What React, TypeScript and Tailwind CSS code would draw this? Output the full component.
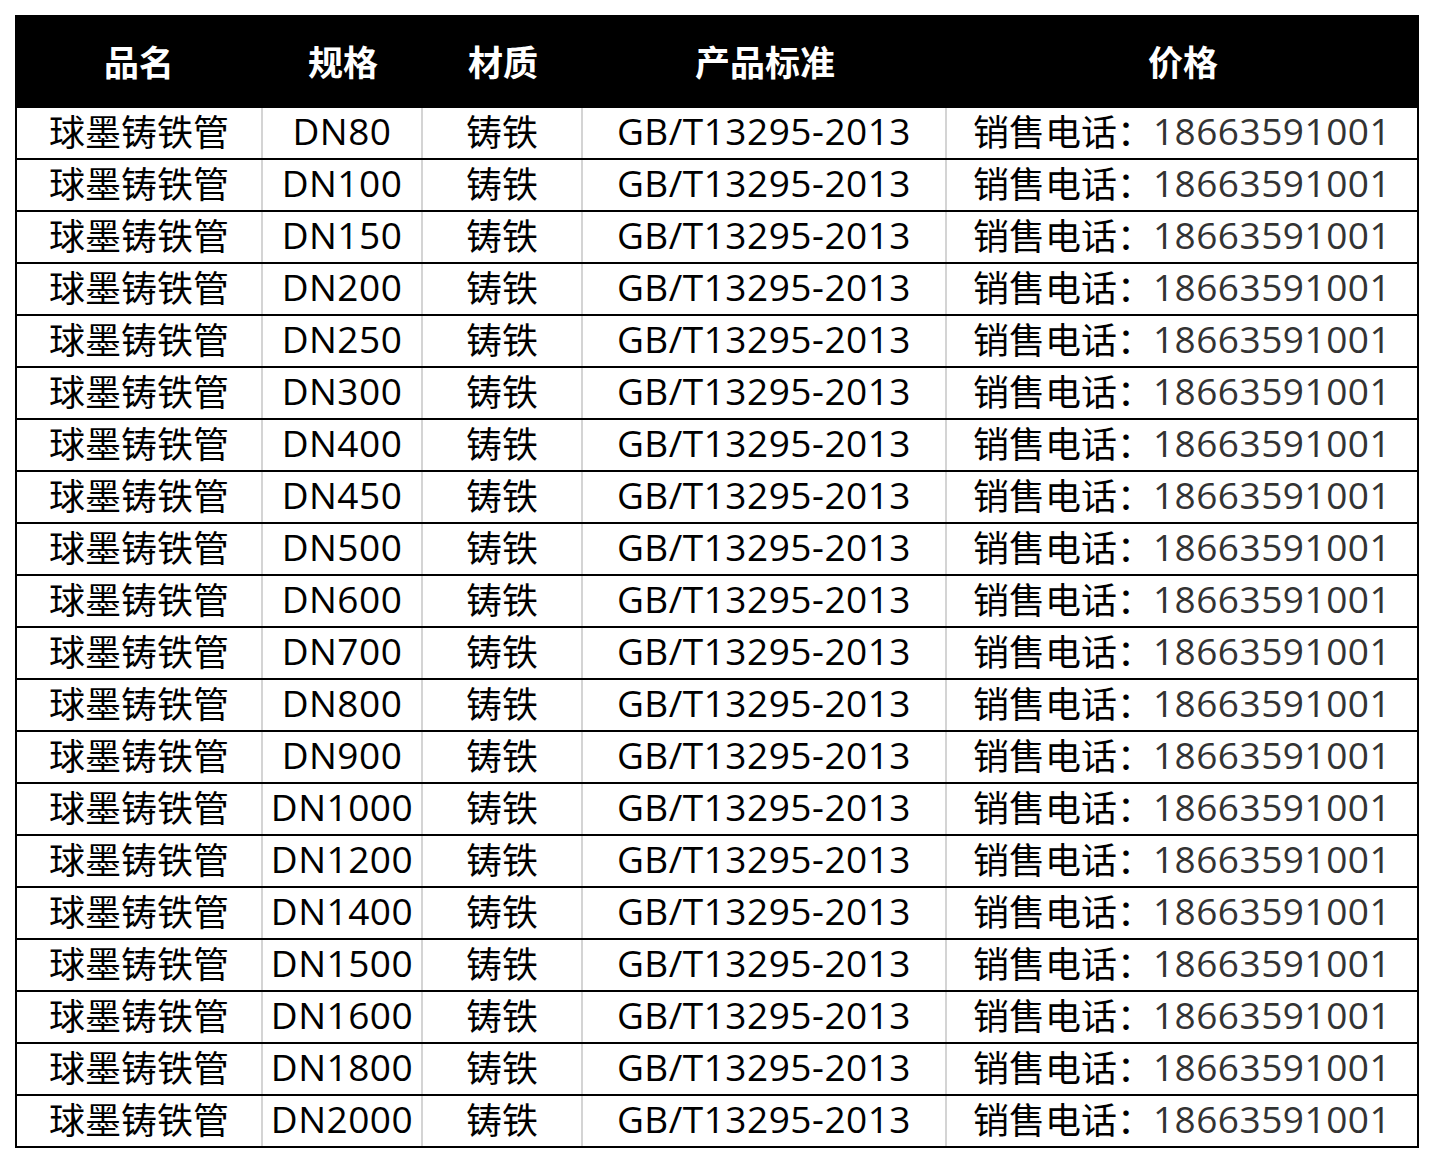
import React from "react";

const sizes = [
  "DN80", "DN100", "DN150", "DN200", "DN250", "DN300", "DN400", "DN450", "DN500", "DN600",
  "DN700", "DN800", "DN900", "DN1000", "DN1200", "DN1400", "DN1500", "DN1600", "DN1800", "DN2000",
];

const headers = ["品名", "规格", "材质", "产品标准", "价格"];
const colW = ["w-[248px]", "w-[160px]", "w-[160px]", "w-[364px]", "flex-1"];

export default function App() {
  return (
    <div
      className="bg-white w-[1434px] h-[1164px] pt-[15px] pl-[15px]"
      style={{ fontFamily: '"Open Sans", "Noto Sans CJK SC", sans-serif' }}
    >
      <div className="w-[1404px] border-x-2 border-black">
        {/* header */}
        <div className="flex h-[93px] bg-black text-white font-bold text-[35px] -mx-[2px]">
          {headers.map((h, i) => (
            <div
              key={h}
              className={`${colW[i]} flex items-center justify-center`}
              style={{ fontFamily: '"Noto Sans CJK SC", sans-serif' }}
            >
              {h}
            </div>
          ))}
        </div>

        {/* rows */}
        {sizes.map((s) => (
          <div key={s} className="flex h-[52px] border-b-2 border-black text-[36px] text-black leading-none">
            <div className="w-[246px] border-r-2 border-[#d4d4d4] flex items-center justify-center">
              球墨铸铁管
            </div>
            <div className="w-[160px] border-r-2 border-[#d4d4d4] flex items-center justify-center pb-[6px] text-[37px] tracking-[0.5px]">
              {s}
            </div>
            <div className="w-[160px] border-r-2 border-[#d4d4d4] flex items-center justify-center">
              铸铁
            </div>
            <div className="w-[364px] border-r-2 border-[#d4d4d4] flex items-center justify-center pb-[6px] text-[37px] tracking-[0.5px]">
              GB/T13295-2013
            </div>
            <div className="flex-1 flex items-center justify-center">
              <span>销售电话：</span>
              <span className="text-[#333] text-[37px] tracking-[0.5px] pb-[6px]">18663591001</span>
            </div>
          </div>
        ))}
      </div>
    </div>
  );
}
